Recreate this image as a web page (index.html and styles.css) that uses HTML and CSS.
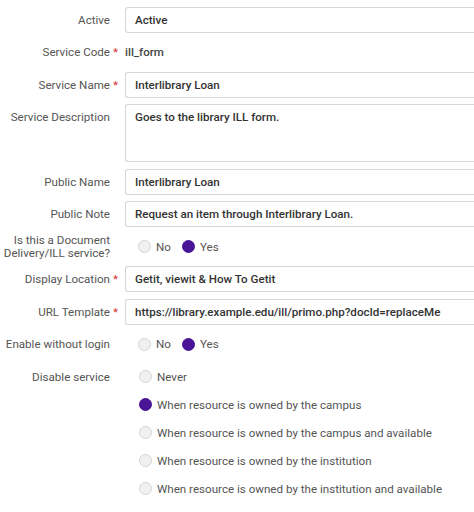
FILE: index.html
```html
<!DOCTYPE html>
<html>
<head>
<meta charset="utf-8">
<link rel="stylesheet" href="styles.css">
</head>
<body>
<div class="form">
  <div class="label">Active</div><div class="req"></div>
  <div class="ctrl"><div class="box">Active</div></div>

  <div class="label">Service Code</div><div class="req">*</div>
  <div class="ctrl"><div class="plain">ill_form</div></div>

  <div class="label">Service Name</div><div class="req">*</div>
  <div class="ctrl"><div class="box">Interlibrary Loan</div></div>

  <div class="label top">Service Description</div><div class="req"></div>
  <div class="ctrl"><div class="box area">Goes to the library ILL form.</div></div>

  <div class="label">Public Name</div><div class="req"></div>
  <div class="ctrl"><div class="box">Interlibrary Loan</div></div>

  <div class="label">Public Note</div><div class="req"></div>
  <div class="ctrl"><div class="box">Request an item through Interlibrary Loan.</div></div>

  <div class="label two">Is this a Document Delivery/ILL service?</div><div class="req"></div>
  <div class="ctrl"><div class="radios">
    <span class="opt"><span class="dot"></span>No</span>
    <span class="opt"><span class="dot on"></span>Yes</span>
  </div></div>

  <div class="label">Display Location</div><div class="req">*</div>
  <div class="ctrl"><div class="box">Getit, viewit &amp; How To Getit</div></div>

  <div class="label">URL Template</div><div class="req">*</div>
  <div class="ctrl"><div class="box">https://library.example.edu/ill/primo.php?docId=replaceMe</div></div>

  <div class="label">Enable without login</div><div class="req"></div>
  <div class="ctrl"><div class="radios">
    <span class="opt"><span class="dot"></span>No</span>
    <span class="opt"><span class="dot on"></span>Yes</span>
  </div></div>

  <div class="label top">Disable service</div><div class="req"></div>
  <div class="ctrl"><div class="list">
    <span class="opt"><span class="dot"></span>Never</span>
    <span class="opt"><span class="dot on"></span>When resource is owned by the campus</span>
    <span class="opt"><span class="dot"></span>When resource is owned by the campus and available</span>
    <span class="opt"><span class="dot"></span>When resource is owned by the institution</span>
    <span class="opt"><span class="dot"></span>When resource is owned by the institution and available</span>
  </div></div>
</div>
</body>
</html>
```
FILE: styles.css
```css
html, body {
  margin: 0;
  padding: 0;
  background: #fff;
  overflow: hidden;
}
body {
  font-family: Roboto, "Liberation Sans", sans-serif;
  font-size: 11.6px;
  color: #555;
}
.form {
  display: grid;
  grid-template-columns: 110px 15px 1fr;
  row-gap: 6.5px;
  padding-top: 6.5px;
}
.label {
  text-align: right;
  display: flex;
  align-items: center;
  justify-content: flex-end;
  min-height: 26px;
  color: #555;
  white-space: nowrap;
}
.label.top {
  align-items: flex-start;
  padding-top: 6px;
}
.label.two {
  white-space: normal;
  line-height: 13px;
}
.req {
  color: #d32f2f;
  display: flex;
  align-items: center;
  padding-left: 3px;
  min-height: 26px;
}
.ctrl {
  min-width: 0;
}
.box {
  width: 100%;
  height: 26px;
  box-sizing: border-box;
  border: 1px solid #d6d6d6;
  border-right: none;
  border-radius: 3px 0 0 3px;
  padding: 0 9px;
  display: flex;
  align-items: center;
  font-weight: 500;
  color: #333;
  white-space: nowrap;
  overflow: hidden;
}
.box.area {
  height: 58px;
  align-items: flex-start;
  padding-top: 5px;
}
.plain {
  height: 26px;
  display: flex;
  align-items: center;
  font-weight: 500;
  color: #444;
}
.radios {
  height: 26px;
  display: flex;
  align-items: center;
  gap: 11px;
  padding-left: 13px;
}
.list {
  display: flex;
  flex-direction: column;
  padding-left: 14px;
}
.list .opt {
  height: 28px;
}
.list .opt:first-child {
  height: 26px;
  margin-bottom: 1px;
}
.opt {
  display: flex;
  align-items: center;
  gap: 5px;
  color: #555;
  white-space: nowrap;
}
.dot {
  width: 13px;
  height: 13px;
  box-sizing: border-box;
  border-radius: 50%;
  background: #f0f0f0;
  border: 1px solid #d4d4d4;
  flex: none;
}
.dot.on {
  background: #4a1497;
  border-color: #4a1497;
}
```
